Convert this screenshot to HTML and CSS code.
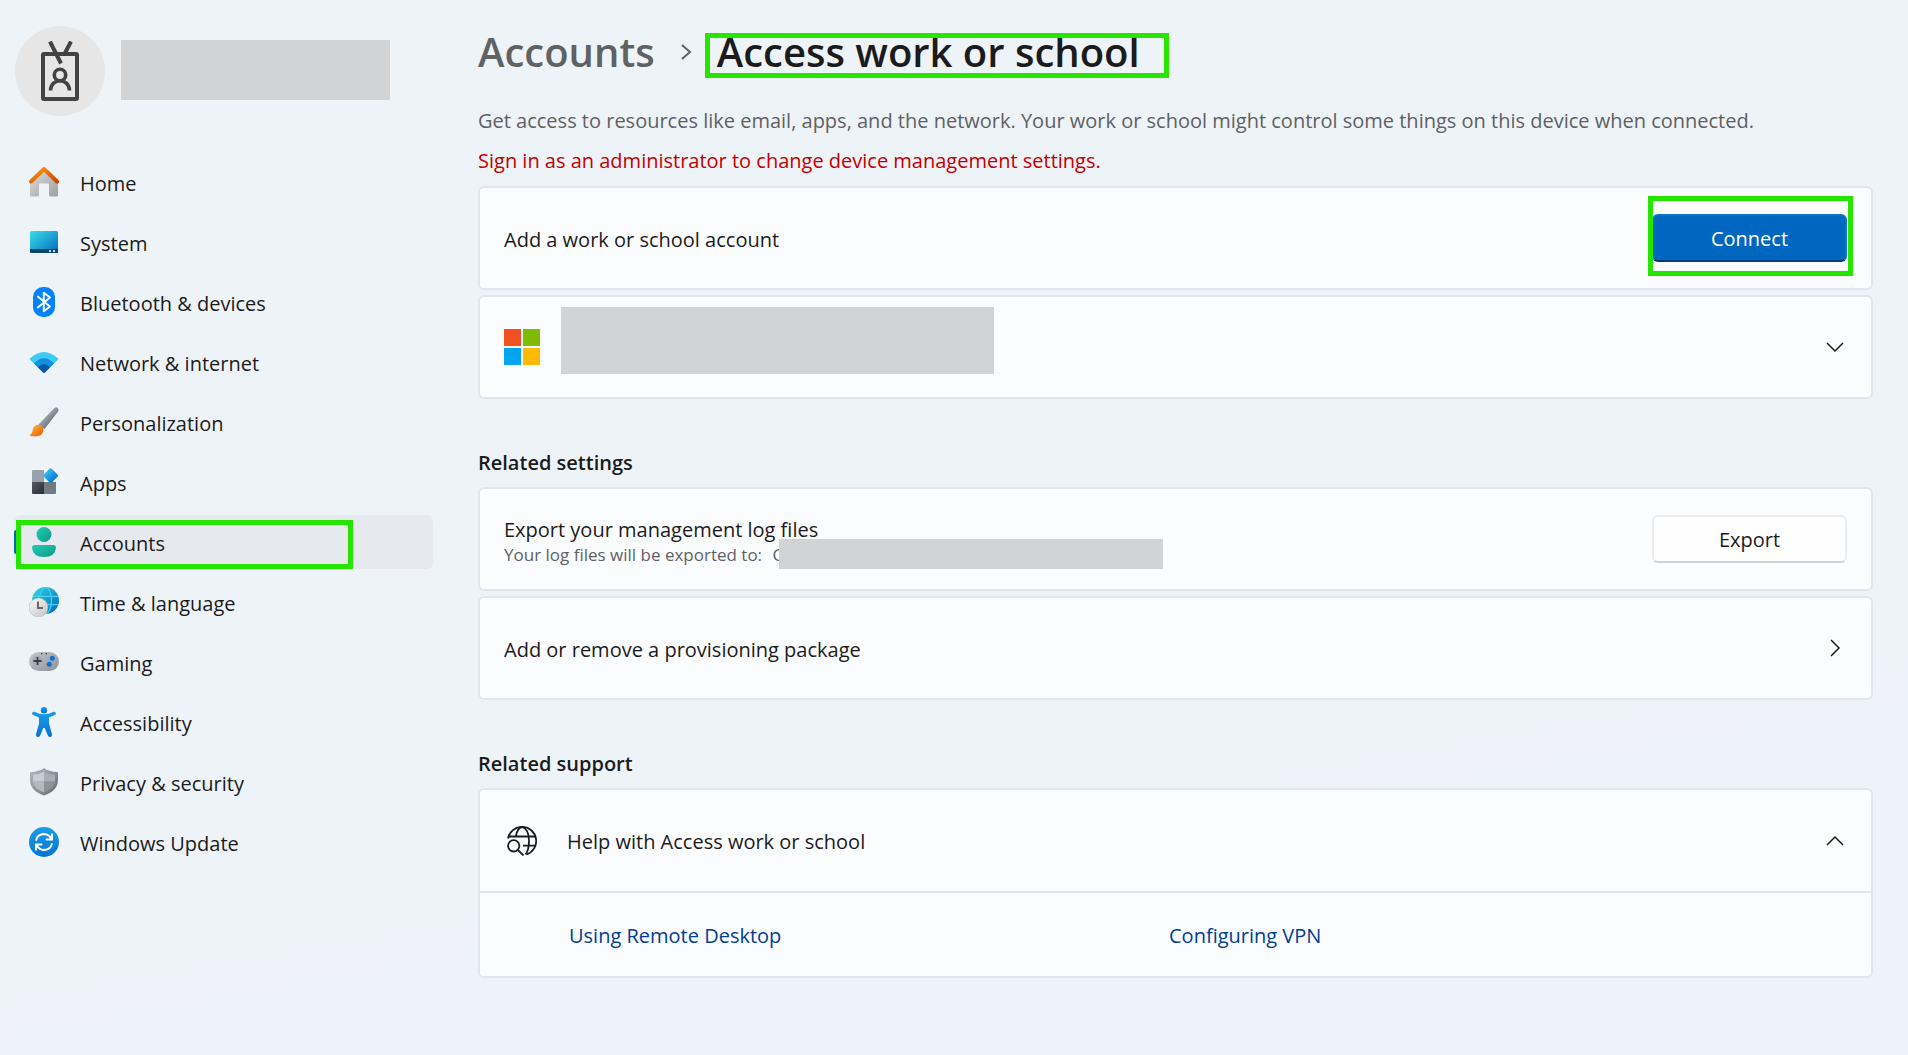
FILE: index.html
```html
<!DOCTYPE html>
<html lang="en">
<head>
    <meta charset="UTF-8">
    <meta name="viewport" content="width=device-width, initial-scale=1.0">
    <title>Settings - Access work or school</title>
    <link rel="stylesheet" href="styles.css">
</head>
<body>
    <div class="settings">
        <aside class="sidebar">
            <div class="profile">
                <div class="avatar">
                    <svg width="38" height="61" viewBox="0 0 38 61" fill="none" stroke="#434343" stroke-width="4">
                        <rect x="2" y="13" width="34" height="45" rx="1"/>
                        <path d="M9 0.5 L20 22.5 M30 0.5 L24 12"/>
                        <circle cx="19" cy="34" r="5.7" stroke-width="3.6"/>
                        <path d="M9.5 49.500 C10 36.500 28 36.500 28.500 49.500" stroke-width="3.600"/>
                    </svg>
                </div>
                <div class="redacted profile-name"></div>
            </div>

            <nav class="menu">
                <a href="#" class="menu-item">
                    <svg class="menu-icon" viewBox="0 0 30 30">
                        <defs>
                            <linearGradient id="roof" x1="0" y1="0" x2="1" y2="1"><stop offset="0" stop-color="#f9a010"/><stop offset="1" stop-color="#d33e02"/></linearGradient>
                            <linearGradient id="wall" x1="0" y1="0" x2="1" y2="1"><stop offset="0" stop-color="#dedede"/><stop offset="1" stop-color="#9f9f9f"/></linearGradient>
                        </defs>
                        <path fill="url(#wall)" d="M1 14 L15 2 L29 14 V28 Q29 29.500 27.500 29.500 H21.500 Q20 29.500 20 28 V17.500 Q20 16.500 19 16.500 H11 Q10 16.500 10 17.500 V28 Q10 29.500 8.500 29.500 H2.500 Q1 29.500 1 28 Z"/>
                        <path d="M2 14.500 L15 2 L28 14.500" fill="none" stroke="url(#roof)" stroke-width="4" stroke-linecap="round" stroke-linejoin="round"/>
                    </svg>
                    <span class="text">Home</span>
                </a>
                <a href="#" class="menu-item">
                    <svg class="menu-icon" viewBox="0 0 30 30">
                        <defs>
                            <linearGradient id="screen" x1="0" y1="0" x2="1" y2="1"><stop offset="0" stop-color="#38e0e6"/><stop offset="1" stop-color="#0567c0"/></linearGradient>
                        </defs>
                        <rect x="1" y="4" width="28" height="22" rx="1.500" fill="url(#screen)"/>
                        <path d="M1 22 H29 V24.500 Q29 26 27.500 26 H2.500 Q1 26 1 24.500 Z" fill="#0b4668"/>
                        <path d="M20 23 h2 v2 h-2z M24 23 h2 v2 h-2z" fill="#c5e3ee"/>
                    </svg>
                    <span class="text">System</span>
                </a>
                <a href="#" class="menu-item">
                    <svg class="menu-icon" viewBox="0 0 30 30">
                        <rect x="4" y="0" width="22" height="30" rx="10" fill="#0083fd"/>
                        <path d="M8.800 9.500 L21 19.500 L14.800 24.200 V5.800 L21 10.500 L8.800 20.500" fill="none" stroke="#fff" stroke-width="1.900" stroke-linejoin="round" stroke-linecap="round"/>
                    </svg>
                    <span class="text">Bluetooth &amp; devices</span>
                </a>
                <a href="#" class="menu-item">
                    <svg class="menu-icon" viewBox="0 0 30 30">
                        <path d="M1 11.500 Q15 -1.500 29 11.500 Q29.500 12.200 29 12.700 L15.800 25.500 Q15 26.200 14.200 25.500 L1 12.700 Q0.500 12.200 1 11.500Z" fill="#3dcbf6"/>
                        <path d="M5 16.600 Q15 6 25 16.600 L15.800 25.500 Q15 26.200 14.200 25.500Z" fill="#128edf"/>
                        <path d="M9 20.500 Q15 13.500 21 20.500 L15.800 25.500 Q15 26.200 14.200 25.500Z" fill="#0b59a6"/>
                    </svg>
                    <span class="text">Network &amp; internet</span>
                </a>
                <a href="#" class="menu-item">
                    <svg class="menu-icon" viewBox="0 0 30 30">
                        <defs>
                            <linearGradient id="handle" x1="0" y1="0" x2="1" y2="1"><stop offset="0.200" stop-color="#b4bcc3"/><stop offset="0.800" stop-color="#5d666f"/></linearGradient>
                            <linearGradient id="bristle" x1="0" y1="0" x2="1" y2="1"><stop offset="0" stop-color="#ffc02c"/><stop offset="1" stop-color="#e8550f"/></linearGradient>
                        </defs>
                        <path d="M25.200 1.200 Q27.500 -0.500 29 1.300 Q30.200 3 28.800 5 L15.500 22 L9.500 17.500Z" fill="url(#handle)"/>
                        <path d="M4 21.500 Q6 17.300 10 17.800 Q14.500 18.800 14.500 23 Q13.800 29.500 6 29.500 Q2.500 29.500 0.500 28.500 Q3.500 26.500 4 21.500Z" fill="url(#bristle)"/>
                    </svg>
                    <span class="text">Personalization</span>
                </a>
                <a href="#" class="menu-item">
                    <svg class="menu-icon" viewBox="0 0 30 30">
                        <defs>
                            <linearGradient id="diamond" x1="0" y1="0" x2="1" y2="1"><stop offset="0.200" stop-color="#35bdf3"/><stop offset="0.800" stop-color="#0874d2"/></linearGradient>
                            <linearGradient id="dark" x1="0" y1="0" x2="1" y2="1"><stop offset="0" stop-color="#54595e"/><stop offset="1" stop-color="#2b2e31"/></linearGradient>
                        </defs>
                        <path d="M4 3 H15 V15 H3 V4 Q3 3 4 3Z" fill="#98a1aa"/>
                        <path d="M3 15 H15 V27 H4 Q3 27 3 26Z" fill="url(#dark)"/>
                        <path d="M15 15 H27 V26 Q27 27 26 27 H15Z" fill="#727a82"/>
                        <path d="M20.800 1.600 Q21.700 0.700 22.600 1.600 L28.700 7.800 Q29.500 8.700 28.700 9.600 L22.600 15.800 Q21.700 16.600 20.800 15.800 L14.600 9.600 Q13.800 8.700 14.600 7.800Z" fill="url(#diamond)"/>
                    </svg>
                    <span class="text">Apps</span>
                </a>
                <a href="#" class="menu-item active">
                    <svg class="menu-icon" viewBox="0 0 30 30">
                        <defs>
                            <linearGradient id="person" x1="0" y1="0" x2="1" y2="1"><stop offset="0" stop-color="#25cbb4"/><stop offset="1" stop-color="#0b9a87"/></linearGradient>
                        </defs>
                        <circle cx="15" cy="7.500" r="7.500" fill="url(#person)"/>
                        <path d="M6 18 H24 Q27 18 27 21 Q26 30 15 30 Q4 30 3 21 Q3 18 6 18Z" fill="url(#person)"/>
                    </svg>
                    <span class="text">Accounts</span>
                </a>
                <a href="#" class="menu-item">
                    <svg class="menu-icon" viewBox="0 0 30 30">
                        <defs>
                            <linearGradient id="globe" x1="0" y1="0" x2="1" y2="1"><stop offset="0" stop-color="#30dbe0"/><stop offset="1" stop-color="#0561bf"/></linearGradient>
                            <linearGradient id="clock" x1="0" y1="0" x2="1" y2="1"><stop offset="0" stop-color="#f8f8f8"/><stop offset="1" stop-color="#c5c5c5"/></linearGradient>
                        </defs>
                        <circle cx="16.500" cy="13.500" r="13.500" fill="url(#globe)"/>
                        <g fill="none" stroke="#3fd3ef" stroke-width="1.200">
                            <ellipse cx="16.500" cy="13.500" rx="6" ry="13"/>
                            <path d="M4 9.300 H29 M4 17.700 H29"/>
                        </g>
                        <circle cx="9.500" cy="20.500" r="9.500" fill="url(#clock)" stroke="#a9b1b5" stroke-width="0.500"/>
                        <path d="M9 14.500 V21 H14" fill="none" stroke="#666" stroke-width="1.900"/>
                    </svg>
                    <span class="text">Time &amp; language</span>
                </a>
                <a href="#" class="menu-item">
                    <svg class="menu-icon" viewBox="0 0 30 30">
                        <defs>
                            <linearGradient id="pad" x1="0" y1="0" x2="1" y2="1"><stop offset="0" stop-color="#c5cad0"/><stop offset="1" stop-color="#8c9298"/></linearGradient>
                        </defs>
                        <rect x="0" y="5" width="30" height="19" rx="9.500" fill="url(#pad)"/>
                        <circle cx="8.500" cy="14" r="5.500" fill="#a8adb3"/>
                        <path d="M8.500 10 V18 M4.500 14 H12.500" stroke="#3b3f43" stroke-width="1.800"/>
                        <path d="M12 6 h1.500 v1.500 h-1.500z M16.500 6 h1.500 v1.500 h-1.500z" fill="#555"/>
                        <circle cx="23.300" cy="11.300" r="2.500" fill="#0f72cc"/>
                        <circle cx="20.300" cy="17.300" r="2.500" fill="#0f72cc"/>
                    </svg>
                    <span class="text">Gaming</span>
                </a>
                <a href="#" class="menu-item">
                    <svg class="menu-icon" viewBox="0 0 30 30">
                        <defs>
                            <linearGradient id="access" x1="0" y1="0" x2="0" y2="1"><stop offset="0" stop-color="#1b9de8"/><stop offset="1" stop-color="#0574d2"/></linearGradient>
                        </defs>
                        <g fill="url(#access)">
                            <circle cx="15" cy="3.200" r="3.200"/>
                            <path d="M5.500 4.700 Q15 9.700 24.500 4.700 Q26.800 4.400 27 6.300 Q27 7.700 25.500 8.300 L20 10.600 V16.500 L23 27.300 Q23.200 29.500 21.500 30 Q19.800 30.300 19 28.800 L15.700 21 H14.300 L11 28.800 Q10.200 30.300 8.500 30 Q6.800 29.500 7 27.300 L10 16.500 V10.600 L4.500 8.300 Q3 7.700 3 6.300 Q3.200 4.400 5.500 4.700Z"/>
                        </g>
                    </svg>
                    <span class="text">Accessibility</span>
                </a>
                <a href="#" class="menu-item">
                    <svg class="menu-icon" viewBox="0 0 30 30">
                        <defs>
                            <linearGradient id="shield" x1="0" y1="0" x2="1" y2="1"><stop offset="0" stop-color="#b5bcc2"/><stop offset="1" stop-color="#62686e"/></linearGradient>
                        </defs>
                        <path d="M15 1 Q20 4.700 28 5 Q29 5 29 6 V13 Q29 23.500 15.600 28.300 Q15 28.500 14.400 28.300 Q1 23.500 1 13 V6 Q1 5 2 5 Q10 4.700 15 1Z" fill="url(#shield)"/>
                        <path d="M15 4.500 V14.500 H4 V7.800 Q10.500 7.500 15 4.500Z" fill="#c8cdd2"/>
                        <path d="M15 4.500 V14.500 H26 V7.800 Q19.500 7.500 15 4.500Z" fill="#a8aeb4"/>
                        <path d="M15 25.500 V14.500 H4 Q4.500 21.500 15 25.500Z" fill="#b4b9be"/>
                        <path d="M15 25.500 V14.500 H26 Q25.500 21.500 15 25.500Z" fill="#8c9298"/>
                    </svg>
                    <span class="text">Privacy &amp; security</span>
                </a>
                <a href="#" class="menu-item">
                    <svg class="menu-icon" viewBox="0 0 30 30">
                        <circle cx="15" cy="15" r="15" fill="url(#access)"/>
                        <path d="M7.200 13 Q8.500 7.200 15 7 Q20 7.200 22.300 11.800 M17.500 12.500 H23 V7.200 M22.800 17 Q21.500 22.800 15 23 Q10 22.800 7.700 18.200 M12.500 17.500 H7 V22.800" fill="none" stroke="#fff" stroke-width="1.900" stroke-linecap="round"/>
                    </svg>
                    <span class="text">Windows Update</span>
                </a>
            </nav>
        </aside>

        <main class="content">
            <h1 class="breadcrumb">
                <a href="#" class="parent">Accounts</a>
                <svg class="separator" viewBox="0 0 12 18"><path d="M2 2 L10 9 L2 16"/></svg>
                <span class="current">Access work or school</span>
            </h1>
            <p class="description">Get access to resources like email, apps, and the network. Your work or school might control some things on this device when connected.</p>
            <p class="warning">Sign in as an administrator to change device management settings.</p>

            <section class="cards">
                <div class="card row">
                    <span class="text">Add a work or school account</span>
                    <div class="connect-wrap">
                        <button class="btn primary">Connect</button>
                    </div>
                </div>
                <div class="card row">
                    <svg class="ms-logo" viewBox="0 0 36 36">
                        <path fill="#f35022" d="M0 0h17v17H0z"/>
                        <path fill="#80bb03" d="M19 0h17v17H19z"/>
                        <path fill="#02a5f0" d="M0 19h17v17H0z"/>
                        <path fill="#ffb903" d="M19 19h17v17H19z"/>
                    </svg>
                    <div class="redacted account-name"></div>
                    <button class="icon-btn" aria-label="Expand account">
                        <svg class="chevron" viewBox="0 0 18 18"><path d="M1 5 L9 13 L17 5"/></svg>
                    </button>
                </div>
            </section>

            <h2>Related settings</h2>
            <section class="cards">
                <div class="card row">
                    <div class="label text">
                        <span>Export your management log files</span>
                        <small>Your log files will be exported to: <span class="path">C<span class="redacted path-cover"></span></span></small>
                    </div>
                    <button class="btn">Export</button>
                </div>
                <a href="#" class="card row">
                    <span class="text">Add or remove a provisioning package</span>
                    <svg class="chevron" viewBox="0 0 18 18"><path d="M5 1 L13 9 L5 17"/></svg>
                </a>
            </section>

            <h2>Related support</h2>
            <section class="card">
                <div class="row">
                    <svg class="help-icon" viewBox="0 0 30 30" fill="none" stroke="#1b1b1b" stroke-width="1.800">
                        <path d="M1 12.500 A14.200 14.200 0 1 1 19.500 28.500"/>
                        <path d="M1.500 10.500 H28.500 M16 19.700 H28.500"/>
                        <path d="M8.800 10.500 Q10.500 1.500 15 1 Q22 3 22 15 Q22 24 18.500 28.500"/>
                        <circle cx="6.700" cy="19.800" r="5.700"/>
                        <path d="M10.800 24 L16.500 29.500"/>
                    </svg>
                    <span class="text">Help with Access work or school</span>
                    <button class="icon-btn" aria-label="Collapse help">
                        <svg class="chevron" viewBox="0 0 18 18"><path d="M1 13 L9 5 L17 13"/></svg>
                    </button>
                </div>
                <div class="help-links">
                    <a href="#">Using Remote Desktop</a>
                    <a href="#">Configuring VPN</a>
                </div>
            </section>
        </main>
    </div>
</body>
</html>
```
FILE: styles.css
```css
:root {
    --text-color: #1b1b1b;
    --muted-color: #5f6163;
    --card-color: #fbfcfe;
    --border-color: #e0e6eb;
    --accent-color: #0067c0;
    --link-color: #003e92;
    --highlight-color: #26e600;
    --redacted-color: #d2d3d5;
}

* {
    margin: 0;
    padding: 0;
    box-sizing: border-box;
    font-family: 'Open Sans', 'Noto Sans', sans-serif;
}

body {
    min-height: 100vh;
    background: linear-gradient(170deg, #eef3f8 70%, #eef2fb 85%);
    color: var(--text-color);
    font-size: 20px;
    line-height: 28px;
}

a {
    color: inherit;
    text-decoration: none;
}

.settings {
    display: grid;
    grid-template-columns: 419px 1fr;
    column-gap: 45px;
    padding: 26px 35px 40px 14px;
}

.text {
    padding-top: 3px;
}

.redacted {
    background: var(--redacted-color);
}

/* Sidebar */
.profile {
    display: flex;
    align-items: center;
    gap: 16px;
    margin-bottom: 39px;
    padding-left: 1px;
}

.avatar {
    display: flex;
    align-items: center;
    justify-content: center;
    width: 90px;
    height: 90px;
    border-radius: 50%;
    background: #e6e6e6;
}

.profile-name {
    width: 269px;
    height: 60px;
    margin-bottom: 2px;
}

.menu {
    display: flex;
    flex-direction: column;
    gap: 6px;
}

.menu-item {
    position: relative;
    display: flex;
    align-items: center;
    gap: 21px;
    height: 54px;
    padding-left: 15px;
    border-radius: 6px;
}

.menu-icon {
    width: 30px;
    height: 30px;
}

.menu-item.active {
    background: #e6e9ee;
}

.menu-item.active::before {
    content: "";
    position: absolute;
    left: 0;
    top: 15px;
    width: 4px;
    height: 24px;
    border-radius: 2px;
    background: var(--accent-color);
}

/* Green highlight frames */
.menu-item.active::after,
.current::after,
.connect-wrap::after {
    content: "";
    position: absolute;
    border: 5px solid var(--highlight-color);
    pointer-events: none;
}

.menu-item.active::after {
    inset: 5px 80px 0 2px;
}

.current::after {
    inset: 7px -29px 0 -12px;
}

.connect-wrap::after {
    inset: -18px -6px -14px -4px;
}

/* Content */
.breadcrumb {
    display: flex;
    align-items: center;
    gap: 25px;
    font-size: 40px;
    font-weight: 600;
    line-height: 52px;
    margin-bottom: 29px;
}

.parent {
    color: var(--muted-color);
}

.current {
    position: relative;
}

.separator {
    width: 12px;
    height: 18px;
    fill: none;
    stroke: var(--muted-color);
    stroke-width: 2;
}

.description {
    color: var(--muted-color);
    margin-bottom: 12px;
}

.warning {
    color: #c40000;
    margin-bottom: 11px;
}

h2 {
    font-size: 20px;
    font-weight: 600;
    line-height: 28px;
    margin: 50px 0 10px;
}

.cards {
    display: flex;
    flex-direction: column;
    gap: 5px;
}

.card {
    background: var(--card-color);
    border: 2px solid var(--border-color);
    border-radius: 6px;
}

.row {
    display: flex;
    align-items: center;
    min-height: 101px;
    padding: 0 24px;
}

.card.row {
    min-height: 104px;
}

.row > :last-child {
    margin-left: auto;
}

.connect-wrap {
    position: relative;
}

.btn {
    display: block;
    width: 195px;
    height: 48px;
    border: 2px solid #ebecee;
    border-bottom-color: #cfd1d4;
    border-radius: 6px;
    background: #fefefe;
    color: var(--text-color);
    font-size: 20px;
    cursor: pointer;
}

.btn.primary {
    border-color: #1070c5;
    border-bottom-color: #003e73;
    background: var(--accent-color);
    color: white;
}

.icon-btn {
    border: none;
    background: none;
    cursor: pointer;
}

.chevron {
    display: block;
    width: 18px;
    height: 18px;
    margin-right: 3px;
    fill: none;
    stroke: var(--text-color);
    stroke-width: 1.5;
}

.ms-logo {
    width: 36px;
    height: 36px;
    margin-right: 21px;
}

.account-name {
    width: 433px;
    height: 67px;
    margin-bottom: 13px;
}

.label {
    display: flex;
    flex-direction: column;
}

.label small {
    color: var(--muted-color);
    font-size: 17px;
    line-height: 22px;
}

.path {
    position: relative;
    margin-left: 6px;
}

.path-cover {
    position: absolute;
    left: 6px;
    top: -4px;
    width: 384px;
    height: 30px;
}

.help-icon {
    width: 30px;
    height: 30px;
    margin: 0 30px 0 3px;
}

.help-links {
    display: grid;
    grid-template-columns: 600px 1fr;
    padding: 29px 24px 26px 89px;
    border-top: 2px solid var(--border-color);
    color: var(--link-color);
}
```
